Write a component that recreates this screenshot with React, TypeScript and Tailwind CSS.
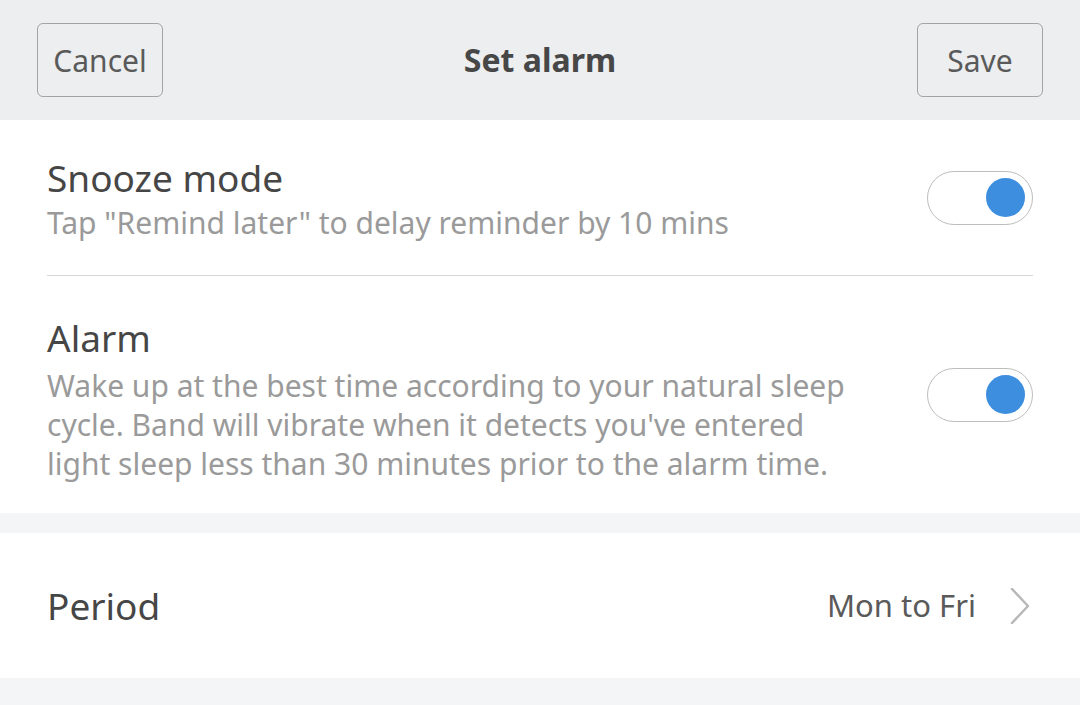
function Toggle() {
  return (
    <div className="w-[106px] h-[54px] rounded-full border border-[#bdbdbd] bg-white flex items-center justify-end pr-[7px] shrink-0">
      <div className="w-[39px] h-[39px] rounded-full bg-[#3e8ee0]" />
    </div>
  );
}

export default function App() {
  return (
    <div className="w-[1080px] h-[705px] bg-[#f4f5f7] overflow-hidden" style={{ fontFamily: '"Noto Sans", "Open Sans", sans-serif' }}>
      <header className="h-[120px] bg-[#eceef0] flex items-center justify-between px-[37px]">
        <button className="w-[126px] h-[74px] rounded-[6px] border border-[#a3a3a3] text-[30px] text-[#5a5a5a]">Cancel</button>
        <h1 className="text-[32px] font-bold text-[#474747]">Set alarm</h1>
        <button className="w-[126px] h-[74px] rounded-[6px] border border-[#a3a3a3] text-[30px] text-[#5a5a5a]">Save</button>
      </header>

      <section className="bg-white px-[47px]">
        <div className="flex items-center justify-between h-[156px] border-b border-[#d6d6d6]">
          <div className="pt-[4px]">
            <div className="text-[37px] leading-[44px] text-[#464646] mb-[2px]">Snooze mode</div>
            <div className="text-[30px] leading-[42px] text-[#9a9a9a]">Tap "Remind later" to delay reminder by 10 mins</div>
          </div>
          <Toggle />
        </div>
        <div className="flex items-center justify-between h-[237px]">
          <div className="max-w-[810px] mt-[10px]">
            <div className="text-[37px] leading-[44px] text-[#464646] mb-[6px]">Alarm</div>
            <div className="text-[30px] leading-[39px] text-[#9a9a9a]">
              Wake up at the best time according to your natural sleep cycle. Band will vibrate when it detects you've entered light sleep less than 30 minutes prior to the alarm time.
            </div>
          </div>
          <Toggle />
        </div>
      </section>

      <div className="h-[20px]" />

      <section className="bg-white h-[145px] px-[47px] flex items-center justify-between">
        <div className="text-[37px] text-[#464646]">Period</div>
        <div className="flex items-center gap-[34px] pr-[3px]">
          <span className="text-[31px] text-[#5a5a5a]">Mon to Fri</span>
          <svg width="20" height="36" viewBox="0 0 20 36" fill="none">
            <polyline points="2,1 18,18 2,35" stroke="#b8b8b8" strokeWidth="2.5" strokeLinejoin="round" strokeLinecap="round" />
          </svg>
        </div>
      </section>
    </div>
  );
}
